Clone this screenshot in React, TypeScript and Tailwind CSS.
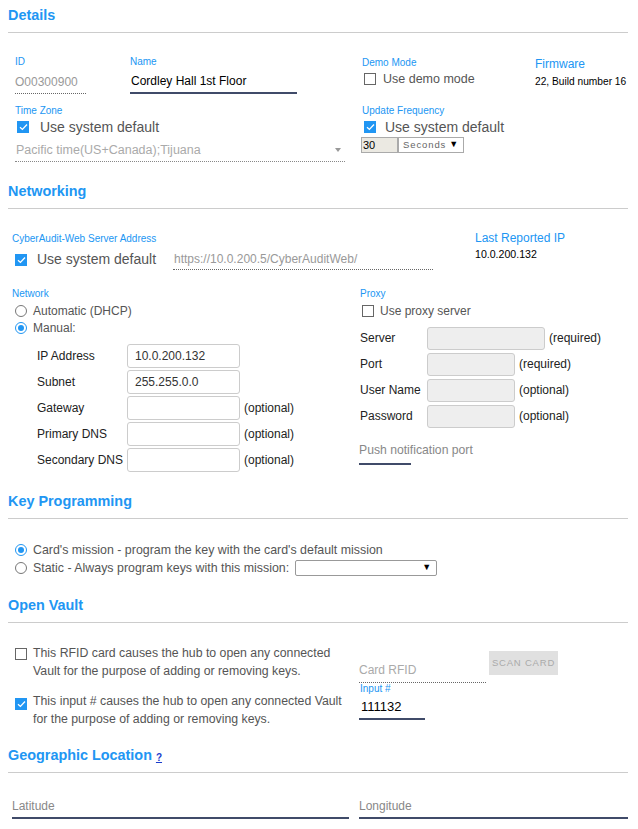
import React from "react";

const Check = ({ on }: { on?: boolean }) =>
  on ? (
    <span className="inline-flex w-[12px] h-[12px] bg-[#2196f3] items-center justify-center shrink-0">
      <svg width="9" height="8" viewBox="0 0 9 8">
        <path d="M1 4.2 L3.4 6.4 L8 1.5" stroke="white" strokeWidth="1.3" fill="none" />
      </svg>
    </span>
  ) : (
    <span className="inline-block w-[12px] h-[12px] border-[1.5px] border-[#666] bg-white shrink-0" />
  );

const Radio = ({ on }: { on?: boolean }) => (
  <span
    className={
      "inline-flex w-[12px] h-[12px] rounded-full border items-center justify-center bg-white shrink-0 " +
      (on ? "border-[#2196f3]" : "border-[#777]")
    }
  >
    {on && <span className="w-[6px] h-[6px] rounded-full bg-[#2196f3]" />}
  </span>
);

const Header = ({ children }: { children: React.ReactNode }) => (
  <div className="h-[32px] border-b border-[#cccccc] flex items-center pb-[2px] text-[14.4px] font-bold text-[#2196f3]">
    {children}
  </div>
);

const Label = ({ children }: { children: React.ReactNode }) => (
  <div className="text-[10px] leading-[12px] text-[#2196f3] whitespace-nowrap">{children}</div>
);

const ipRows: [string, string, string][] = [
  ["IP Address", "10.0.200.132", ""],
  ["Subnet", "255.255.0.0", ""],
  ["Gateway", "", "(optional)"],
  ["Primary DNS", "", "(optional)"],
  ["Secondary DNS", "", "(optional)"],
];

const proxyRows: [string, string, string][] = [
  ["Server", "w-[118px]", "(required)"],
  ["Port", "w-[88px]", "(required)"],
  ["User Name", "w-[88px]", "(optional)"],
  ["Password", "w-[88px]", "(optional)"],
];

export default function App() {
  return (
    <div className="w-[638px] h-[829px] overflow-hidden bg-white pt-[1px] pl-[8px] pr-[10px] font-['Liberation_Sans',Arial,sans-serif]">
      {/* Details */}
      <Header>Details</Header>
      <div className="flex mt-[23px]">
        <div className="w-[354px] shrink-0 pl-[7px]">
          <div className="flex">
            <div className="w-[71px]">
              <Label>ID</Label>
              <div className="h-[26px] pt-[2px] border-b border-dotted border-[#666] flex items-center text-[12px] text-[#999]">
                O00300900
              </div>
            </div>
            <div className="ml-[44px] w-[167px]">
              <Label>Name</Label>
              <div className="h-[26px] pt-[2px] border-b-2 border-[#404b69] flex items-center pl-[1px] text-[12px] text-black">
                Cordley Hall 1st Floor
              </div>
            </div>
          </div>
          <div className="mt-[11px]">
            <Label>Time Zone</Label>
          </div>
          <div className="h-[20px] flex items-center pl-[2px] gap-[11px] text-[14px] text-[#555]">
            <Check on />
            <span>Use system default</span>
          </div>
          <div className="h-[25px] pt-[2px] w-[330px] border-b border-dotted border-[#888] flex items-center justify-between pl-[1px] pr-[4px] text-[12.5px] text-[#aaa]">
            <span>Pacific time(US+Canada);Tijuana</span>
            <span className="w-0 h-0 border-l-[3px] border-r-[3px] border-t-[4px] border-l-transparent border-r-transparent border-t-[#999]" />
          </div>
        </div>
        <div className="flex-1">
          <div className="flex">
            <div className="w-[173px] shrink-0">
              <div className="mt-[1px]">
                <Label>Demo Mode</Label>
              </div>
              <div className="h-[20px] flex items-center pl-[2px] gap-[7px] text-[12.5px] text-[#555]">
                <Check />
                <span>Use demo mode</span>
              </div>
            </div>
            <div className="mt-[1px] whitespace-nowrap">
              <div className="text-[12px] leading-[14px] text-[#2196f3]">Firmware</div>
              <div className="mt-[4px] text-[10.2px] leading-[13px] text-black">22, Build number 16</div>
            </div>
          </div>
          <div className="mt-[16px]">
            <Label>Update Frequency</Label>
          </div>
          <div className="h-[20px] flex items-center pl-[2px] gap-[9px] text-[14px] text-[#555]">
            <Check on />
            <span>Use system default</span>
          </div>
          <div className="flex h-[16px] -ml-[1px]">
            <div className="w-[37px] h-[16px] bg-[#ebe9e2] border border-[#aaa] flex items-center pl-[1px] text-[11px] text-black">
              30
            </div>
            <div className="w-[66px] h-[16px] border border-[#aaa] flex items-center justify-between px-[4px] text-[9.5px] tracking-[0.9px] text-[#666]">
              <span>Seconds</span>
              <span className="text-[9px] text-black">▼</span>
            </div>
          </div>
        </div>
      </div>

      {/* Networking */}
      <div className="mt-[15px]">
        <Header>Networking</Header>
      </div>
      <div className="flex">
        <div className="w-[467px] shrink-0 pl-[4px] pt-[24px]">
          <Label>CyberAudit-Web Server Address</Label>
          <div className="flex h-[25px] pt-[4px]">
            <div className="w-[161px] flex items-center pl-[3px] gap-[10px] text-[14px] text-[#555]">
              <Check on />
              <span className="whitespace-nowrap">Use system default</span>
            </div>
            <div className="w-[260px] border-b border-dotted border-[#666] flex items-center pl-[1px] text-[12px] text-[#999]">
              https://10.0.200.5/CyberAuditWeb/
            </div>
          </div>
        </div>
        <div className="pt-[22px] whitespace-nowrap">
          <div className="text-[12px] leading-[14px] text-[#2196f3]">Last Reported IP</div>
          <div className="mt-[2px] text-[10.6px] leading-[14px] text-black">10.0.200.132</div>
        </div>
      </div>
      <div className="flex mt-[18px]">
        <div className="w-[352px] shrink-0 pl-[4px]">
          <Label>Network</Label>
          <div className="h-[17px] mt-[2px] flex items-center pl-[3px] gap-[6px] text-[12px] text-[#555]">
            <Radio />
            <span>Automatic (DHCP)</span>
          </div>
          <div className="h-[17px] flex items-center pl-[3px] gap-[6px] text-[12px] text-[#555]">
            <Radio on />
            <span>Manual:</span>
          </div>
          <div className="mt-[8px] pl-[25px]">
            {ipRows.map(([l, v, n]) => (
              <div key={l} className="flex items-center h-[24px] mb-[2px] text-[12px] text-[#222]">
                <span className="w-[90px] whitespace-nowrap">{l}</span>
                <div className="w-[113px] h-[24px] border border-[#cccccc] rounded-[3px] flex items-center pl-[7px] text-[12px] text-[#333]">
                  {v}
                </div>
                {n && <span className="ml-[4px]">{n}</span>}
              </div>
            ))}
          </div>
        </div>
        <div className="flex-1">
          <Label>Proxy</Label>
          <div className="h-[17px] mt-[2px] flex items-center pl-[2px] gap-[6px] text-[12px] text-[#555]">
            <Check />
            <span>Use proxy server</span>
          </div>
          <div className="mt-[6px]">
            {proxyRows.map(([l, w, n]) => (
              <div key={l} className="flex items-center h-[26px] text-[12px] text-[#222]">
                <span className="w-[67px] whitespace-nowrap">{l}</span>
                <div className={"h-[23px] bg-[#eeeeee] border border-[#cccccc] rounded-[3px] " + w} />
                <span className="ml-[4px]">{n}</span>
              </div>
            ))}
          </div>
          <div className="mt-[10px] -ml-[1px] w-[52px] h-[26px] border-b-2 border-[#404b69] flex items-center pb-[2px] text-[12.2px] text-[#888] whitespace-nowrap">
            Push notification port
          </div>
        </div>
      </div>

      {/* Key Programming */}
      <div className="mt-[13px]">
        <Header>Key Programming</Header>
      </div>
      <div className="mt-[22px] pl-[7px] text-[12.4px] text-[#555]">
        <div className="h-[18px] flex items-center gap-[6px]">
          <Radio on />
          <span>Card's mission - program the key with the card's default mission</span>
        </div>
        <div className="h-[18px] flex items-center gap-[6px]">
          <Radio />
          <span>Static - Always program keys with this mission:</span>
          <div className="w-[142px] h-[16px] border border-[#999] rounded-[2px] flex items-center justify-end pr-[5px] text-[9px] text-black">
            ▼
          </div>
        </div>
      </div>

      {/* Open Vault */}
      <div className="mt-[14px]">
        <Header>Open Vault</Header>
      </div>
      <div className="flex">
        <div className="w-[351px] shrink-0 pl-[7px] pt-[21px] text-[12.3px] leading-[18px] text-[#555]">
          <div className="flex gap-[6px]">
            <span className="mt-[3px]">
              <Check />
            </span>
            <span className="whitespace-nowrap">
              This RFID card causes the hub to open any connected
              <br />
              Vault for the purpose of adding or removing keys.
            </span>
          </div>
          <div className="flex gap-[6px] mt-[12px]">
            <span className="mt-[3px]">
              <Check on />
            </span>
            <span className="whitespace-nowrap">
              This input # causes the hub to open any connected Vault
              <br />
              for the purpose of adding or removing keys.
            </span>
          </div>
        </div>
        <div className="flex-1">
          <div className="flex items-start">
            <div className="mt-[35px] w-[127px] h-[25px] border-b border-dotted border-[#666] flex items-center text-[12px] text-[#aaa]">
              Card RFID
            </div>
            <div className="mt-[28px] ml-[3px] w-[69px] h-[24px] bg-[#e0e0e0] flex items-center justify-center text-[9.5px] tracking-[0.8px] text-[#aaa]">
              SCAN CARD
            </div>
          </div>
          <div className="pl-[1px]">
            <Label>Input #</Label>
          </div>
          <div className="w-[66px] h-[25px] pt-[1px] border-b-2 border-[#404b69] flex items-center pl-[2px] text-[13px] text-black">
            111132
          </div>
        </div>
      </div>

      {/* Geographic Location */}
      <div className="mt-[13px]">
        <Header>
          Geographic Location
          <a href="#" className="ml-[4px] mt-[4px] text-[10px] font-bold text-[#1a3ccc] underline">
            ?
          </a>
        </Header>
      </div>
      <div className="flex mt-[20px] pl-[4px] gap-[10px] text-[12px] text-[#888]">
        <div className="w-[337px] h-[26px] border-b-2 border-[#404b69] flex items-center pt-[1px]">Latitude</div>
        <div className="flex-1 h-[26px] border-b-2 border-[#404b69] flex items-center pt-[1px]">Longitude</div>
      </div>
    </div>
  );
}
